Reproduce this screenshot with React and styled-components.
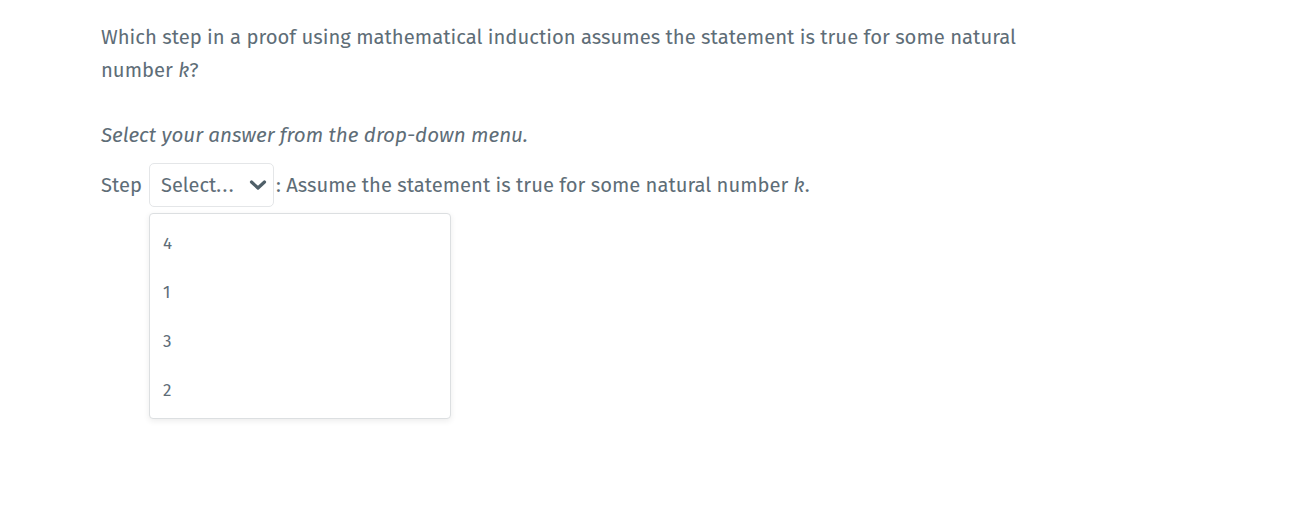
import React from "react";
import styled, { createGlobalStyle } from "styled-components";

const GlobalStyle = createGlobalStyle`
	html, body {
		margin: 0;
		background: #ffffff;
	}
	body {
		font-family: "Fira Sans", Lato, "Open Sans", sans-serif;
		color: #5e6d77;
	}
`;

const Page = styled.div`
	box-sizing: border-box;
	min-height: 521px;
	padding: 21px 0 0 101px;
	width: 1060px;
`;

const Question = styled.p`
	margin: 0;
	font-size: 20.25px;
	line-height: 33px;
`;

const Instruction = styled.p`
	margin: 32px 0 0;
	font-size: 20.6px;
	line-height: 33px;
	font-style: italic;
`;

const Row = styled.div`
	display: flex;
	align-items: center;
	margin-top: 11px;
	font-size: 20.2px;
	height: 44px;
`;

const Label = styled.span`
	margin-right: 7px;
`;

const SelectWrap = styled.div`
	position: relative;
`;

const SelectBox = styled.div`
	box-sizing: border-box;
	width: 125px;
	height: 44px;
	border: 1px solid #e4e6e8;
	border-radius: 5px;
	display: flex;
	align-items: center;
	justify-content: space-between;
	padding: 0 6px 0 11px;
	font-size: 20px;
`;

const Dots = styled.span`
	letter-spacing: 1.4px;
`;

const Menu = styled.ul`
	position: absolute;
	z-index: 10;
	top: 50px;
	left: 0;
	width: 302px;
	box-sizing: border-box;
	margin: 0;
	padding: 5px 0 3px;
	list-style: none;
	background: #fff;
	border: 1px solid #dcdfe1;
	border-radius: 4px;
	box-shadow: 0 2px 6px rgba(0, 0, 0, 0.08);
`;

const Item = styled.li`
	height: 49px;
	display: flex;
	align-items: center;
	padding-left: 13px;
	font-size: 17px;
`;

const Rest = styled.span`
	margin-left: 2px;
`;

const Chevron = () => (
	<svg width="18" height="14" viewBox="0 0 18 14">
		<path
			d="M2.5 4 L9 10 L15.5 4"
			fill="none"
			stroke="#4f5f68"
			strokeWidth="3.2"
			strokeLinecap="round"
			strokeLinejoin="round"
		/>
	</svg>
);

const App = () => {
	const options = ["4", "1", "3", "2"];
	return (
		<>
			<GlobalStyle />
			<Page>
				<Question>
					Which step in a proof using mathematical induction assumes the
					statement is true for some natural number <i>k</i>?
				</Question>
				<Instruction>Select your answer from the drop-down menu.</Instruction>
				<Row>
					<Label>Step</Label>
					<SelectWrap>
						<SelectBox>
							<span>
								Select<Dots>...</Dots>
							</span>
							<Chevron />
						</SelectBox>
						<Menu>
							{options.map((o) => (
								<Item key={o}>{o}</Item>
							))}
						</Menu>
					</SelectWrap>
					<Rest>
						: Assume the statement is true for some natural number <i>k</i>.
					</Rest>
				</Row>
			</Page>
		</>
	);
};

export default App;
